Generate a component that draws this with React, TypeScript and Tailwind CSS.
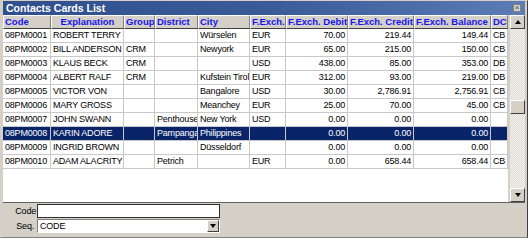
import React from "react";

type Row = {
  code: string;
  name: string;
  group: string;
  district: string;
  city: string;
  cur: string;
  debit: string;
  credit: string;
  balance: string;
  dc: string;
};

const ROWS: Row[] = [
  { code: "08PM0001", name: "ROBERT TERRY", group: "", district: "", city: "Würselen", cur: "EUR", debit: "70.00", credit: "219.44", balance: "149.44", dc: "CB" },
  { code: "08PM0002", name: "BILL ANDERSON", group: "CRM", district: "", city: "Newyork", cur: "EUR", debit: "65.00", credit: "215.00", balance: "150.00", dc: "CB" },
  { code: "08PM0003", name: "KLAUS BECK", group: "CRM", district: "", city: "", cur: "USD", debit: "438.00", credit: "85.00", balance: "353.00", dc: "DB" },
  { code: "08PM0004", name: "ALBERT RALF", group: "CRM", district: "", city: "Kufstein Tirol", cur: "EUR", debit: "312.00", credit: "93.00", balance: "219.00", dc: "DB" },
  { code: "08PM0005", name: "VICTOR VON", group: "", district: "", city: "Bangalore", cur: "USD", debit: "30.00", credit: "2,786.91", balance: "2,756.91", dc: "CB" },
  { code: "08PM0006", name: "MARY GROSS", group: "", district: "", city: "Meanchey", cur: "EUR", debit: "25.00", credit: "70.00", balance: "45.00", dc: "CB" },
  { code: "08PM0007", name: "JOHN SWANN", group: "", district: "Penthouse", city: "New York", cur: "USD", debit: "0.00", credit: "0.00", balance: "0.00", dc: "" },
  { code: "08PM0008", name: "KARIN ADORE", group: "", district: "Pampanga", city: "Philippines", cur: "", debit: "0.00", credit: "0.00", balance: "0.00", dc: "" },
  { code: "08PM0009", name: "INGRID BROWN", group: "", district: "", city: "Düsseldorf", cur: "", debit: "0.00", credit: "0.00", balance: "0.00", dc: "" },
  { code: "08PM0010", name: "ADAM ALACRITY", group: "", district: "Petrich", city: "", cur: "EUR", debit: "0.00", credit: "658.44", balance: "658.44", dc: "CB" },
];

const SELECTED = 7;

const GRID = "grid grid-cols-[48px_73px_31px_43px_52px_36px_62px_66px_77px_17px]";

function HeadCell({ label, center }: { label: string; center?: boolean }) {
  return (
    <div
      className={`h-[14px] overflow-hidden whitespace-nowrap border-t border-l border-t-white border-l-white border-r border-b border-r-[#808080] border-b-[#404040] bg-[#d4d0c8] px-[1px] text-[9.5px] leading-[12px] font-bold text-[#1414f0] ${center ? "text-center" : "text-left"}`}
    >
      {label}
    </div>
  );
}

function Cell({ v, right, sel }: { v: string; right?: boolean; sel: boolean }) {
  return (
    <div
      className={`h-[14px] overflow-hidden whitespace-nowrap border-r border-b border-[#c8c8c8] px-[2px] text-[9px] leading-[13px] tracking-[-0.2px] ${right ? "text-right" : "text-left"} ${sel ? "bg-[#0a246a] text-white" : "text-black"}`}
    >
      {v}
    </div>
  );
}

export default function App() {
  return (
    <div className="h-[244px] w-[530px] bg-white font-['Liberation_Sans',Arial,sans-serif]">
      <div className="flex h-[238px] w-[528px] flex-col border border-t-[#d4d0c8] border-l-[#d4d0c8] border-r-[#404040] border-b-[#808080] bg-[#d4d0c8] px-[2px] pt-0">
        {/* title */}
        <div className="flex h-[14px] items-center justify-between bg-gradient-to-r from-[#2f4f8f] via-[#3a5a98] to-[#5c7cb6] pl-[3px] pr-[4px]">
          <span className="text-[10.5px] leading-[12px] font-bold text-white">Contacts Cards List</span>
          <div className="flex h-[8px] w-[8px] items-center justify-center border border-[#808080] bg-[#d4d0c8] text-[8px] leading-[6px] text-[#404040]">
            ×
          </div>
        </div>

        {/* grid + scrollbar */}
        <div className="flex h-[188px] border-b border-[#606060]">
          <div className="flex w-[507px] flex-col bg-white">
            <div className={GRID}>
              <HeadCell label="Code" />
              <HeadCell label="Explanation" center />
              <HeadCell label="Group" />
              <HeadCell label="District" />
              <HeadCell label="City" />
              <HeadCell label="F.Exch." />
              <HeadCell label="F.Exch. Debit" />
              <HeadCell label="F.Exch. Credit" />
              <HeadCell label="F.Exch. Balance" />
              <HeadCell label="DC" />
            </div>
            {ROWS.map((r, i) => {
              const sel = i === SELECTED;
              return (
                <div key={r.code} className={GRID}>
                  <Cell v={r.code} sel={sel} />
                  <Cell v={r.name} sel={sel} />
                  <Cell v={r.group} sel={sel} />
                  <Cell v={r.district} sel={sel} />
                  <Cell v={r.city} sel={sel} />
                  <Cell v={r.cur} sel={sel} />
                  <Cell v={r.debit} right sel={sel} />
                  <Cell v={r.credit} right sel={sel} />
                  <Cell v={r.balance} right sel={sel} />
                  <Cell v={r.dc} sel={sel} />
                </div>
              );
            })}
          </div>

          {/* vertical scrollbar */}
          <div className="ml-[2px] flex w-[15px] flex-col bg-[#ecebe6] bg-[repeating-conic-gradient(#f4f3ef_0_25%,#dcdad3_0_50%)] bg-[length:2px_2px]">
            <div className="flex h-[14px] items-center justify-center border border-t-white border-l-white border-r-[#404040] border-b-[#404040] bg-[#d4d0c8]">
              <div className="h-0 w-0 border-x-[3.5px] border-b-[4px] border-x-transparent border-b-black" />
            </div>
            <div className="h-[71px]" />
            <div className="h-[14px] border border-t-white border-l-white border-r-[#404040] border-b-[#404040] bg-[#d4d0c8]" />
            <div className="flex-1" />
            <div className="flex h-[14px] items-center justify-center border border-t-white border-l-white border-r-[#404040] border-b-[#404040] bg-[#d4d0c8]">
              <div className="h-0 w-0 border-x-[3.5px] border-t-[4px] border-x-transparent border-t-black" />
            </div>
          </div>
        </div>

        {/* bottom search panel */}
        <div className="flex flex-col gap-[1px] pt-[1px]">
          <div className="flex items-center">
            <span className="w-[34px] pr-[1px] text-right text-[9px] leading-[12px] tracking-[-0.2px] text-black">Code</span>
            <div className="h-[14px] w-[183px] border border-[#303030] bg-white" />
          </div>
          <div className="flex items-center">
            <span className="w-[34px] pr-[3px] text-right text-[9px] leading-[12px] tracking-[-0.2px] text-black">Seq.</span>
            <div className="flex h-[14px] w-[183px] items-center border border-t-[#808080] border-l-[#808080] border-r-white border-b-white bg-white">
              <span className="flex-1 pl-[2px] text-[9px] leading-[12px] tracking-[-0.2px] text-black">CODE</span>
              <div className="flex h-[12px] w-[12px] items-center justify-center border border-t-white border-l-white border-r-[#404040] border-b-[#404040] bg-[#d4d0c8]">
                <div className="h-0 w-0 border-x-[3.5px] border-t-[4px] border-x-transparent border-t-black" />
              </div>
            </div>
          </div>
        </div>
      </div>
    </div>
  );
}
